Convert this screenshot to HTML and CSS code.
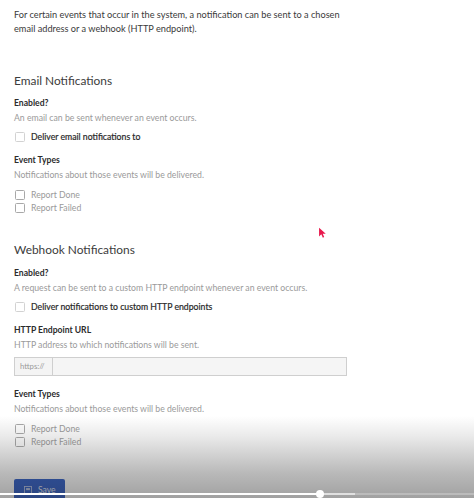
FILE: index.html
```html
<!DOCTYPE html>
<html>
<head>
<meta charset="utf-8">
<link rel="stylesheet" href="styles.css">
</head>
<body>
<div class="page">
  <p class="intro">For certain events that occur in the system, a notification can be sent to a chosen<br>email address or a webhook (HTTP endpoint).</p>

  <section class="section email">
    <h2 class="title">Email Notifications</h2>
    <div class="field">
      <div class="label">Enabled?</div>
      <div class="help">An email can be sent whenever an event occurs.</div>
      <label class="check main"><span class="box"></span><span>Deliver email notifications to</span></label>
    </div>
    <div class="field">
      <div class="label">Event Types</div>
      <div class="help">Notifications about those events will be delivered.</div>
      <div class="checks">
        <label class="check muted"><span class="box"></span><span>Report Done</span></label>
        <label class="check muted"><span class="box"></span><span>Report Failed</span></label>
      </div>
    </div>
  </section>

  <section class="section webhook">
    <h2 class="title">Webhook Notifications</h2>
    <div class="field">
      <div class="label">Enabled?</div>
      <div class="help">A request can be sent to a custom HTTP endpoint whenever an event occurs.</div>
      <label class="check main"><span class="box"></span><span>Deliver notifications to custom HTTP endpoints</span></label>
    </div>
    <div class="field">
      <div class="label">HTTP Endpoint URL</div>
      <div class="help">HTTP address to which notifications will be sent.</div>
      <div class="input-group">
        <span class="addon">https://</span>
        <span class="input"></span>
      </div>
    </div>
    <div class="field after-input">
      <div class="label">Event Types</div>
      <div class="help">Notifications about those events will be delivered.</div>
      <div class="checks">
        <label class="check muted"><span class="box"></span><span>Report Done</span></label>
        <label class="check muted"><span class="box"></span><span>Report Failed</span></label>
      </div>
    </div>
  </section>

  <div class="actions">
    <button class="save"><svg class="save-icon" viewBox="0 0 10 10" width="8" height="8"><rect x="0.6" y="0.6" width="8.8" height="8.8" fill="none" stroke="#b4c2e6" stroke-width="1.1"/><rect x="2.6" y="2.6" width="4.8" height="2.6" fill="#b4c2e6"/></svg><span>Save</span></button>
  </div>
</div>

<div class="overlay">
  <div class="progress">
    <div class="played"></div>
    <div class="buffered"></div>
    <div class="knob"></div>
  </div>
</div>
<svg class="cursor" viewBox="0 0 10 14" width="9" height="12"><path d="M1 1 L1 11 L3.6 8.6 L5.4 12.6 L7 11.8 L5.3 8 L8.8 8 Z" fill="#e8194d"/></svg>
</body>
</html>
```

FILE: styles.css
```css
html, body {
  margin: 0;
  padding: 0;
  background: #ffffff;
}
body {
  width: 474px;
  height: 498px;
  overflow: hidden;
  position: relative;
  font-family: Lato, "Liberation Sans", sans-serif;
  color: #333333;
}
.page {
  padding: 8px 14px 0 14px;
}
.intro {
  margin: 0;
  font-size: 9.2px;
  line-height: 14px;
  color: #3a3a3a;
}
.section {
  display: flex;
  flex-direction: column;
}
.email {
  margin-top: 36px;
}
.webhook {
  margin-top: 27px;
}
.title {
  margin: 0;
  font-size: 11.9px;
  font-weight: 400;
  line-height: 18px;
  color: #3c3c3c;
}
.field {
  display: flex;
  flex-direction: column;
  margin-top: 6px;
}
.webhook .field:first-of-type {
  margin-top: 7px;
}
.field + .field {
  margin-top: 10px;
}
.field.after-input {
  margin-top: 11px;
}
.label {
  font-size: 8.6px;
  font-weight: 700;
  line-height: 14px;
  color: #2c2c2c;
}
.help {
  font-size: 8.7px;
  line-height: 16px;
  color: #9a9a9a;
  margin-bottom: 4px;
}
.check {
  display: flex;
  align-items: center;
  gap: 6px;
  font-size: 8.7px;
  line-height: 13px;
  padding-left: 1px;
}
.check.main {
  color: #2a2a2a;
  font-weight: 400;
  -webkit-text-stroke: 0.2px #2a2a2a;
}
.check.muted {
  color: #9a9a9a;
}
.box {
  width: 8px;
  height: 8px;
  border: 1px solid #d2d2d2;
  border-radius: 1.5px;
  background: #fff;
  flex: none;
}
.check.muted .box {
  border-color: #a8a8a8;
}
.checks {
  display: flex;
  flex-direction: column;
  margin-top: 1px;
}
.input-group {
  display: flex;
  width: 333px;
  height: 19px;
  margin-top: 0;
  border: 1px solid #cfcfcf;
  box-sizing: border-box;
  background: #f4f4f4;
}
.addon {
  width: 38px;
  box-sizing: border-box;
  border-right: 1px solid #cfcfcf;
  font-size: 7.8px;
  line-height: 17px;
  color: #9a9a9a;
  padding-left: 5px;
  background: #f4f4f4;
}
.input {
  flex: 1;
  background: #f5f5f5;
}
.actions {
  margin-top: 31px;
}
.save {
  display: flex;
  align-items: center;
  gap: 6px;
  width: 51px;
  height: 22px;
  padding: 0 0 0 10px;
  border: none;
  border-radius: 2px;
  background: #2656c4;
  color: #e2e8f7;
  font-family: Lato, "Liberation Sans", sans-serif;
  font-size: 8.6px;
}
.overlay {
  position: absolute;
  left: 0;
  right: 0;
  bottom: 0;
  height: 82px;
  background: linear-gradient(to bottom, rgba(80,80,80,0) 0%, rgba(80,80,80,0.12) 25%, rgba(60,60,60,0.36) 70%, rgba(50,50,50,0.46) 100%);
  pointer-events: none;
}
.progress {
  position: absolute;
  left: 0;
  right: 0;
  bottom: 3px;
  height: 2px;
  background: rgba(255,255,255,0.25);
}
.played {
  position: absolute;
  left: 0;
  top: 0;
  width: 320px;
  height: 2px;
  background: #ffffff;
}
.buffered {
  position: absolute;
  left: 320px;
  top: 0;
  width: 35px;
  height: 2px;
  background: rgba(255,255,255,0.55);
}
.knob {
  position: absolute;
  left: 316px;
  top: -3px;
  width: 8px;
  height: 8px;
  border-radius: 50%;
  background: #ffffff;
}
.cursor {
  position: absolute;
  left: 318px;
  top: 227px;
}
```
